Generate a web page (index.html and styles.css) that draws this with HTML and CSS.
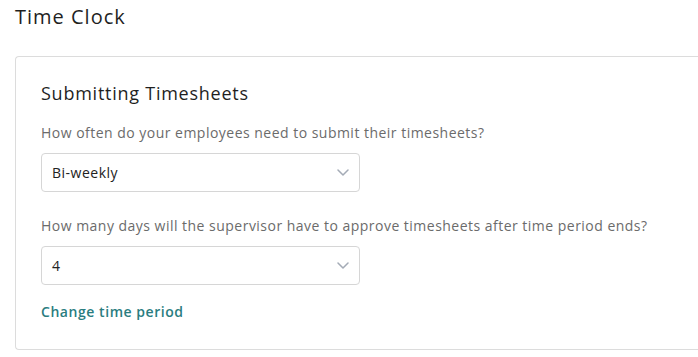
FILE: index.html
```html
<!DOCTYPE html>
<html lang="en">
<head>
    <meta charset="UTF-8">
    <meta name="viewport" content="width=device-width, initial-scale=1.0">
    <title>Time Clock</title>
    <link rel="stylesheet" href="styles.css">
</head>
<body>
    <h1 class="page-title">Time Clock</h1>

    <div class="card">
        <h2 class="card-title">Submitting Timesheets</h2>

        <div class="field">
            <div class="field-label">How often do your employees need to submit their timesheets?</div>
            <div class="select">
                <span class="select-value">Bi-weekly</span>
                <svg class="chevron" width="12" height="7" viewBox="0 0 12 7"><path d="M1 1l5 5 5-5" fill="none" stroke="#a4abb6" stroke-width="1.5" stroke-linecap="round" stroke-linejoin="round"/></svg>
            </div>
        </div>

        <div class="field last">
            <div class="field-label">How many days will the supervisor have to approve timesheets after time period ends?</div>
            <div class="select">
                <span class="select-value">4</span>
                <svg class="chevron" width="12" height="7" viewBox="0 0 12 7"><path d="M1 1l5 5 5-5" fill="none" stroke="#a4abb6" stroke-width="1.5" stroke-linecap="round" stroke-linejoin="round"/></svg>
            </div>
        </div>

        <a class="link" href="#">Change time period</a>
    </div>
</body>
</html>
```

FILE: styles.css
```css
body {
    font-family: "Open Sans", sans-serif;
    margin: 0;
    padding: 0 0 0 15px;
    background: #fff;
    color: #222;
    overflow: hidden;
}

.page-title {
    font-size: 20px;
    font-weight: 500;
    margin: 0;
    padding-top: 4px;
    line-height: 26px;
    letter-spacing: 1px;
    color: #1f1f1f;
}

.card {
    margin-top: 26px;
    border: 1px solid #dcdcdc;
    border-right: none;
    border-radius: 4px 0 0 4px;
    padding: 24px 25px 27px;
}

.card-title {
    font-size: 18px;
    font-weight: 500;
    margin: 0 0 18px;
    line-height: 24px;
    letter-spacing: 0.75px;
    color: #1f1f1f;
}

.field {
    margin-bottom: 24px;
}

.field.last {
    margin-bottom: 17px;
}

.field-label {
    font-size: 14px;
    color: #6b6b6b;
    line-height: 20px;
    letter-spacing: 0.48px;
    margin-bottom: 10px;
}

.select {
    width: 319px;
    height: 39px;
    box-sizing: border-box;
    border: 1px solid #d6d6d6;
    border-radius: 4px;
    display: flex;
    align-items: center;
    justify-content: space-between;
    padding: 0 10px;
}

.select-value {
    font-size: 14px;
    letter-spacing: 0.5px;
    color: #222;
}

.link {
    display: block;
    color: #2a7d7f;
    font-size: 14px;
    font-weight: 600;
    text-decoration: none;
    line-height: 20px;
    letter-spacing: 0.55px;
}
```
